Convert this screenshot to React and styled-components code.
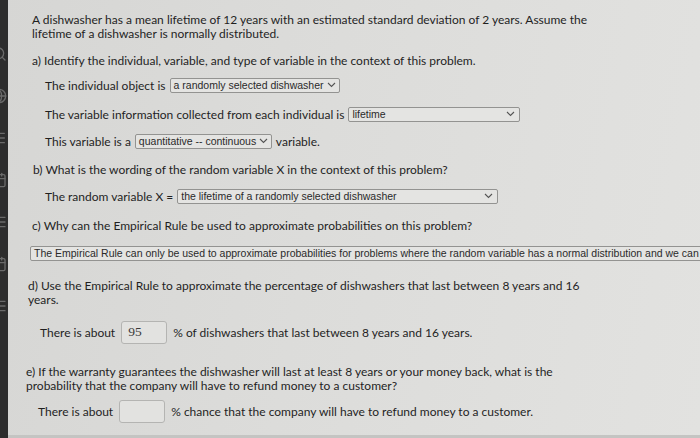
import React from 'react';
import styled, { createGlobalStyle } from 'styled-components';
import { Search, Globe, List, Calendar, Menu } from 'lucide-react';

const GlobalStyle = createGlobalStyle`
  html, body {
    margin: 0;
    padding: 0;
    background: #d8d8d8;
  }
`;

const Page = styled.div`
  display: flex;
  width: 700px;
  height: 438px;
  overflow: hidden;
  background: linear-gradient(100deg, #d6d6d4 0%, #dcdcda 45%, #e2e2e0 100%);
  box-shadow: inset 0 -3px 0 #c4c4c2;
  font-family: 'Lato', 'Open Sans', sans-serif;
  color: #1f1f1f;
`;

const SideBar = styled.div`
  flex: 0 0 8px;
  background: #2d2d2d;
  display: flex;
  flex-direction: column;
  align-items: flex-start;
  gap: 26px;
  padding-top: 46px;
  overflow: hidden;

  svg {
    margin-left: -9px;
    color: #6a6a6a;
    flex: 0 0 auto;
  }
`;

const Content = styled.div`
  flex: 1;
  min-width: 0;
  padding-top: 13px;
  font-size: 12px;
`;

const Para = styled.div`
  margin: ${(p) => p.$top || 0}px 0 0 ${(p) => p.$left || 24}px;
  line-height: ${(p) => p.$lh || 13.5}px;
  white-space: nowrap;
`;

const Row = styled.div`
  display: flex;
  align-items: center;
  gap: 4px;
  height: ${(p) => p.$h || 20}px;
  margin: ${(p) => p.$top || 0}px 0 0 ${(p) => p.$left || 37}px;
  white-space: nowrap;
`;

const SelectBox = styled.div`
  display: inline-flex;
  align-items: center;
  justify-content: space-between;
  box-sizing: border-box;
  width: ${(p) => p.$w}px;
  height: 15px;
  padding: 0 4px 0 3px;
  border: 1px solid #939391;
  border-radius: 2px;
  background: #e4e4e2;
  font-family: 'Liberation Sans', Arial, sans-serif;
  font-size: 10.5px;
  color: #2a2a2a;
  flex: 0 0 auto;
  overflow: hidden;

  svg {
    flex: 0 0 auto;
    margin-left: 3px;
  }
`;

const NumberBox = styled.div`
  box-sizing: border-box;
  width: 46px;
  height: 23px;
  padding: 0 6px;
  display: flex;
  align-items: center;
  border: 1px solid #b4b4b2;
  border-radius: 3px;
  background: #e2e2e0;
  font-family: 'Liberation Serif', 'Times New Roman', serif;
  font-size: 13.5px;
  color: #3a3a3a;
  margin: 0 2px;
`;

const Chevron = () => (
  <svg width="9" height="6" viewBox="0 0 9 6" fill="none">
    <path d="M1 1l3.5 3.5L8 1" stroke="#555" strokeWidth="1.1" />
  </svg>
);

const Select = ({ w, children, noChevron }) => (
  <SelectBox $w={w}>
    <span>{children}</span>
    {!noChevron && <Chevron />}
  </SelectBox>
);

export default function App() {
  return (
    <>
      <GlobalStyle />
      <Page>
        <SideBar>
          <Search size={16} />
          <Globe size={16} />
          <Menu size={16} />
          <Calendar size={16} />
          <List size={16} />
          <Calendar size={16} />
          <List size={16} />
        </SideBar>
        <Content>
          <Para>
            A dishwasher has a mean lifetime of 12 years with an estimated standard deviation of 2 years. Assume the
            <br />
            lifetime of a dishwasher is normally distributed.
          </Para>

          <Row $top={10} $left={24}>
            a) Identify the individual, variable, and type of variable in the context of this problem.
          </Row>

          <Row $top={5}>
            The individual object is
            <Select w={170}>a randomly selected dishwasher</Select>
          </Row>
          <Row $top={9}>
            The variable information collected from each individual is
            <Select w={172}>lifetime</Select>
          </Row>
          <Row $top={7}>
            This variable is a
            <Select w={137}>quantitative -- continuous</Select>
            variable.
          </Row>

          <Row $top={8} $left={25}>b) What is the wording of the random variable X in the context of this problem?</Row>
          <Row $top={7}>
            The random variable X =
            <Select w={321}>the lifetime of a randomly selected dishwasher</Select>
          </Row>

          <Row $top={9} $left={24}>c) Why can the Empirical Rule be used to approximate probabilities on this problem?</Row>
          <Row $top={8} $left={22}>
            <Select w={760} noChevron>
              The Empirical Rule can only be used to approximate probabilities for problems where the random variable has a
              normal distribution and we can
            </Select>
          </Row>

          <Para $top={16} $left={20} $lh={14}>
            d) Use the Empirical Rule to approximate the percentage of dishwashers that last between 8 years and 16
            <br />
            years.
          </Para>
          <Row $top={13} $left={32} $h={24}>
            There is about
            <NumberBox>95</NumberBox>
            % of dishwashers that last between 8 years and 16 years.
          </Row>

          <Para $top={21} $left={18}>
            e) If the warranty guarantees the dishwasher will last at least 8 years or your money back, what is the
            <br />
            probability that the company will have to refund money to a customer?
          </Para>
          <Row $top={7} $left={30} $h={24}>
            There is about
            <NumberBox />
            % chance that the company will have to refund money to a customer.
          </Row>
        </Content>
      </Page>
    </>
  );
}
